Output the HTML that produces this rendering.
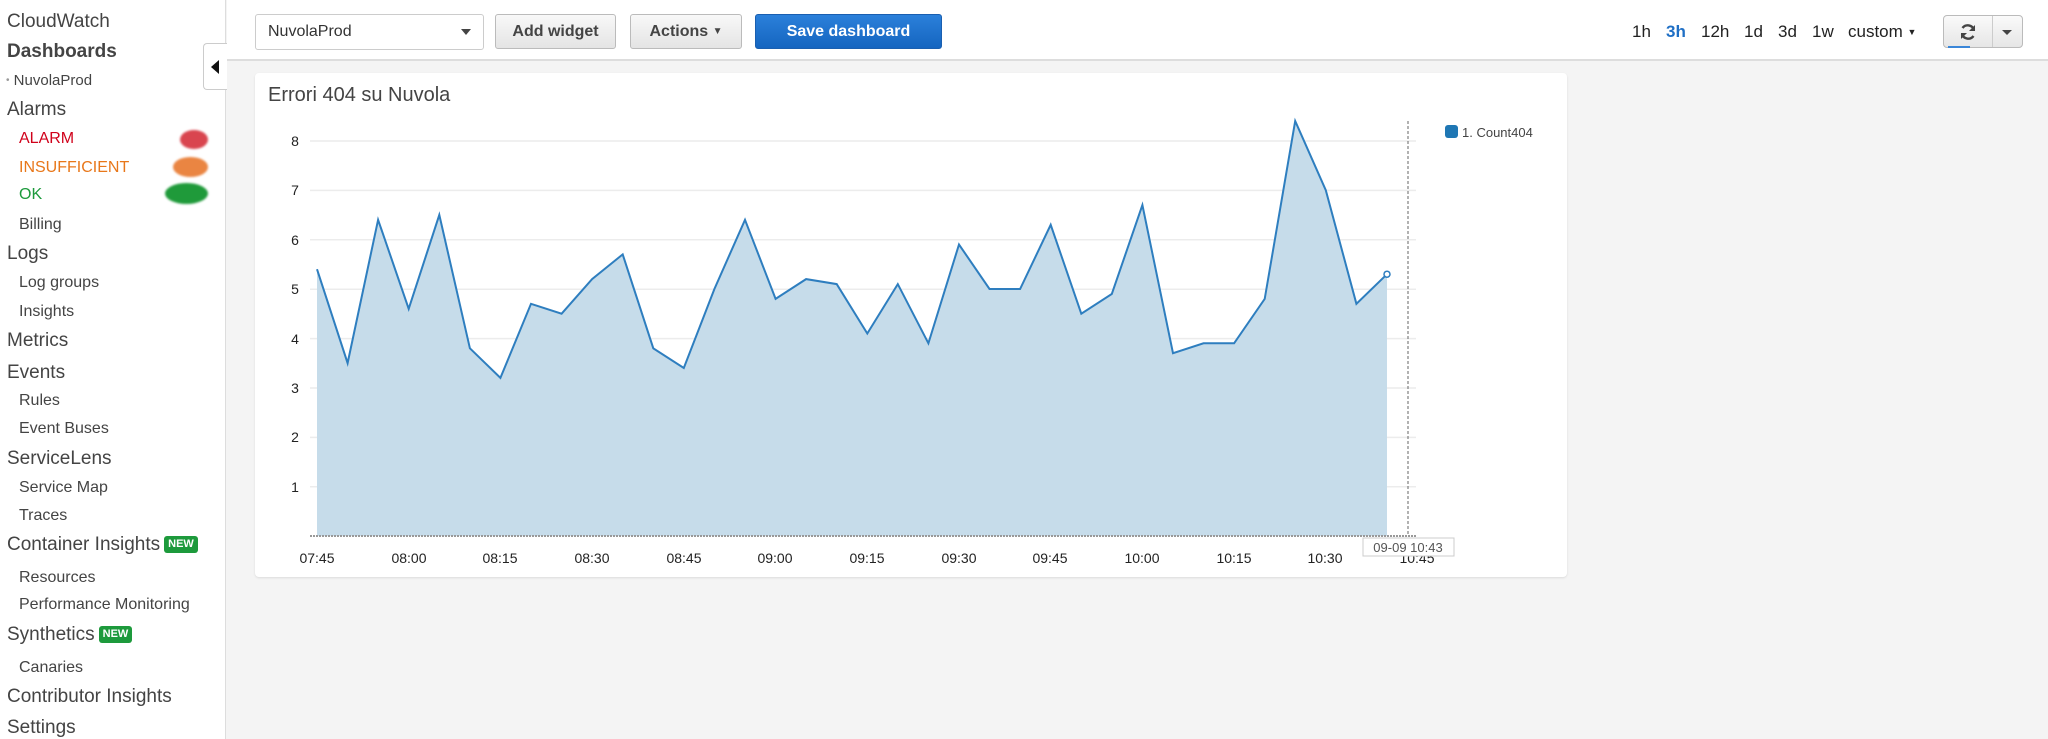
<!DOCTYPE html>
<html><head><meta charset="utf-8">
<style>
*{margin:0;padding:0;box-sizing:border-box}
body{width:2048px;height:739px;overflow:hidden;background:#f4f4f4;font-family:"Liberation Sans",sans-serif;color:#333;position:relative}
.sb{position:absolute;left:0;top:0;width:226px;height:739px;background:#fff;border-right:1px solid #ddd}
.t{position:absolute;white-space:nowrap;line-height:1}
.h{font-size:19px;left:7px;color:#444}
.s{font-size:16px;left:19px;color:#444}
.new{display:inline-block;background:#1d9a3c;color:#fff;font-size:11px;font-weight:bold;padding:3px 4px;border-radius:3px;vertical-align:3px;margin-left:4px}
.blob{position:absolute;border-radius:50%;filter:blur(1px)}
.top{position:absolute;left:227px;top:0;width:1821px;height:61px;background:#fff;border-bottom:2px solid #ddd}
.btn{position:absolute;top:14px;height:35px;border:1px solid #bbb;border-radius:3px;background:linear-gradient(#f8f8f8,#e4e4e4);font-weight:bold;font-size:16px;color:#444;text-align:center;line-height:33px}
.tab{position:absolute;left:203px;top:43px;width:24px;height:47px;background:#fff;border:1px solid #ccc;border-right:none;border-radius:4px 0 0 4px}
</style></head><body>
<div class="sb">
<div class="t h" style="top:12px">CloudWatch</div>
<div class="t h" style="top:42px;font-weight:bold">Dashboards</div>
<div class="t s" style="top:73px;left:6px;font-size:15px"><span style="color:#999;font-size:10px;vertical-align:2px">•</span> NuvolaProd</div>
<div class="t h" style="top:100px">Alarms</div>
<div class="t s" style="top:131px;color:#d0021b">ALARM</div>
<div class="t s" style="top:160px;color:#e8771a">INSUFFICIENT</div>
<div class="t s" style="top:187px;color:#1d9a3c">OK</div>
<div class="blob" style="left:180px;top:130px;width:28px;height:19px;background:#d9454f"></div>
<div class="blob" style="left:173px;top:157px;width:35px;height:20px;background:#ea8542"></div>
<div class="blob" style="left:165px;top:183px;width:43px;height:21px;background:#1f9a3a"></div>
<div class="t s" style="top:217px">Billing</div>
<div class="t h" style="top:244px">Logs</div>
<div class="t s" style="top:275px">Log groups</div>
<div class="t s" style="top:304px">Insights</div>
<div class="t h" style="top:331px">Metrics</div>
<div class="t h" style="top:363px">Events</div>
<div class="t s" style="top:393px">Rules</div>
<div class="t s" style="top:421px">Event Buses</div>
<div class="t h" style="top:449px">ServiceLens</div>
<div class="t s" style="top:480px">Service Map</div>
<div class="t s" style="top:508px">Traces</div>
<div class="t h" style="top:535px">Container Insights<span class="new">NEW</span></div>
<div class="t s" style="top:570px">Resources</div>
<div class="t s" style="top:597px">Performance Monitoring</div>
<div class="t h" style="top:625px">Synthetics<span class="new">NEW</span></div>
<div class="t s" style="top:660px">Canaries</div>
<div class="t h" style="top:687px">Contributor Insights</div>
<div class="t h" style="top:718px">Settings</div>
</div>
<div class="top"></div>
<div class="tab"><div style="position:absolute;left:7px;top:16px;border-right:8px solid #111;border-top:7px solid transparent;border-bottom:7px solid transparent"></div></div>
<div style="position:absolute;left:255px;top:14px;width:229px;height:36px;border:1px solid #ccc;border-radius:3px;background:#fff;font-size:16px;line-height:34px;padding-left:12px">NuvolaProd<div style="position:absolute;right:12px;top:14px;border-top:6px solid #444;border-left:5px solid transparent;border-right:5px solid transparent"></div></div>
<div class="btn" style="left:495px;width:121px">Add widget</div>
<div class="btn" style="left:630px;width:112px">Actions <span style="font-size:10px;vertical-align:2px">▼</span></div>
<div class="btn" style="left:755px;width:187px;background:linear-gradient(#2b80da,#1565c0);border-color:#1a5fb0;color:#fff">Save dashboard</div>
<div class="t" style="top:23px;left:1632px;font-size:17px;color:#222">1h</div>
<div class="t" style="top:23px;left:1666px;font-size:17px;color:#1f6fc5;font-weight:bold">3h</div>
<div class="t" style="top:23px;left:1701px;font-size:17px;color:#222">12h</div>
<div class="t" style="top:23px;left:1744px;font-size:17px;color:#222">1d</div>
<div class="t" style="top:23px;left:1778px;font-size:17px;color:#222">3d</div>
<div class="t" style="top:23px;left:1812px;font-size:17px;color:#222">1w</div>
<div class="t" style="top:23px;left:1848px;font-size:17px;color:#222">custom <span style="font-size:9px;vertical-align:2px">▼</span></div>
<div style="position:absolute;left:1943px;top:15px;width:80px;height:33px;border:1px solid #bbb;border-radius:4px;background:linear-gradient(#fafafa,#e6e6e6)">
<div style="position:absolute;left:48px;top:0;width:1px;height:31px;background:#ccc"></div>
<svg style="position:absolute;left:15px;top:7px" width="18" height="18" viewBox="0 0 18 18"><path d="M15 7A6.5 6.5 0 0 0 3.5 5" fill="none" stroke="#444" stroke-width="2.4"/><path d="M16 2v6h-6z" fill="#444"/><path d="M3 11a6.5 6.5 0 0 0 11.5 2" fill="none" stroke="#444" stroke-width="2.4"/><path d="M2 16v-6h6z" fill="#444"/></svg>
<div style="position:absolute;left:4px;top:30px;width:22px;height:2px;background:#3a86d8"></div>
<div style="position:absolute;left:58px;top:14px;border-top:5px solid #444;border-left:5px solid transparent;border-right:5px solid transparent"></div>
</div>
<div style="position:absolute;left:255px;top:73px;width:1312px;height:504px;background:#fff;border-radius:4px;box-shadow:0 1px 2px rgba(0,0,0,.1)"></div>
<div class="t" style="left:268px;top:85px;font-size:20px;color:#444">Errori 404 su Nuvola</div>
<svg style="position:absolute;left:0;top:0" width="2048" height="739">
<g stroke="#ececec" stroke-width="1.5">
<line x1="310" x2="1416" y1="141" y2="141"/><line x1="310" x2="1416" y1="190.4" y2="190.4"/><line x1="310" x2="1416" y1="239.8" y2="239.8"/><line x1="310" x2="1416" y1="289.2" y2="289.2"/><line x1="310" x2="1416" y1="338.6" y2="338.6"/><line x1="310" x2="1416" y1="388" y2="388"/><line x1="310" x2="1416" y1="437.4" y2="437.4"/><line x1="310" x2="1416" y1="486.8" y2="486.8"/></g>
<g font-family="Liberation Sans" font-size="14" fill="#222" text-anchor="middle">
<text x="295" y="146">8</text><text x="295" y="195">7</text><text x="295" y="245">6</text><text x="295" y="294">5</text><text x="295" y="344">4</text><text x="295" y="393">3</text><text x="295" y="442">2</text><text x="295" y="492">1</text>
<text x="317" y="563">07:45</text><text x="409" y="563">08:00</text><text x="500" y="563">08:15</text><text x="592" y="563">08:30</text><text x="684" y="563">08:45</text><text x="775" y="563">09:00</text><text x="867" y="563">09:15</text><text x="959" y="563">09:30</text><text x="1050" y="563">09:45</text><text x="1142" y="563">10:00</text><text x="1234" y="563">10:15</text><text x="1325" y="563">10:30</text><text x="1417" y="563">10:45</text></g>
<path d="M317 536L317 269.2L347.6 363.1L378.1 219.8L408.7 308.8L439.3 214.9L469.9 348.3L500.4 377.9L531 303.8L561.6 313.7L592.1 279.1L622.7 254.4L653.3 348.3L683.8 368L714.4 289L745 219.8L775.6 298.9L806.1 279.1L836.7 284.1L867.3 333.5L897.8 284.1L928.4 343.3L959 244.5L989.5 289L1020.1 289L1050.7 224.8L1081.3 313.7L1111.8 294L1142.4 205L1173 353.2L1203.5 343.3L1234.1 343.3L1264.7 298.9L1295.2 121L1325.8 190.2L1356.4 303.8L1387 274.2L1387 536Z" fill="#c6dcea"/>
<path d="M317 269.2L347.6 363.1L378.1 219.8L408.7 308.8L439.3 214.9L469.9 348.3L500.4 377.9L531 303.8L561.6 313.7L592.1 279.1L622.7 254.4L653.3 348.3L683.8 368L714.4 289L745 219.8L775.6 298.9L806.1 279.1L836.7 284.1L867.3 333.5L897.8 284.1L928.4 343.3L959 244.5L989.5 289L1020.1 289L1050.7 224.8L1081.3 313.7L1111.8 294L1142.4 205L1173 353.2L1203.5 343.3L1234.1 343.3L1264.7 298.9L1295.2 121L1325.8 190.2L1356.4 303.8L1387 274.2" fill="none" stroke="#2e7ebf" stroke-width="2"/>
<circle cx="1387" cy="274.2" r="3" fill="#fff" stroke="#2e7ebf" stroke-width="1.5"/>
<line x1="310" x2="1416" y1="536" y2="536" stroke="#999" stroke-width="2" stroke-dasharray="2,1"/>
<line x1="1408" x2="1408" y1="121" y2="536" stroke="#666" stroke-width="1" stroke-dasharray="3,2"/>
<rect x="1363" y="538" width="91" height="18" fill="#fff" stroke="#ccc"/>
<text x="1408" y="552" font-family="Liberation Sans" font-size="13" fill="#555" text-anchor="middle">09-09 10:43</text>
<rect x="1445" y="125" width="13" height="13" rx="3" fill="#1f77b4"/>
<text x="1462" y="137" font-family="Liberation Sans" font-size="13" fill="#444">1. Count404</text>
</svg>
</body></html>
